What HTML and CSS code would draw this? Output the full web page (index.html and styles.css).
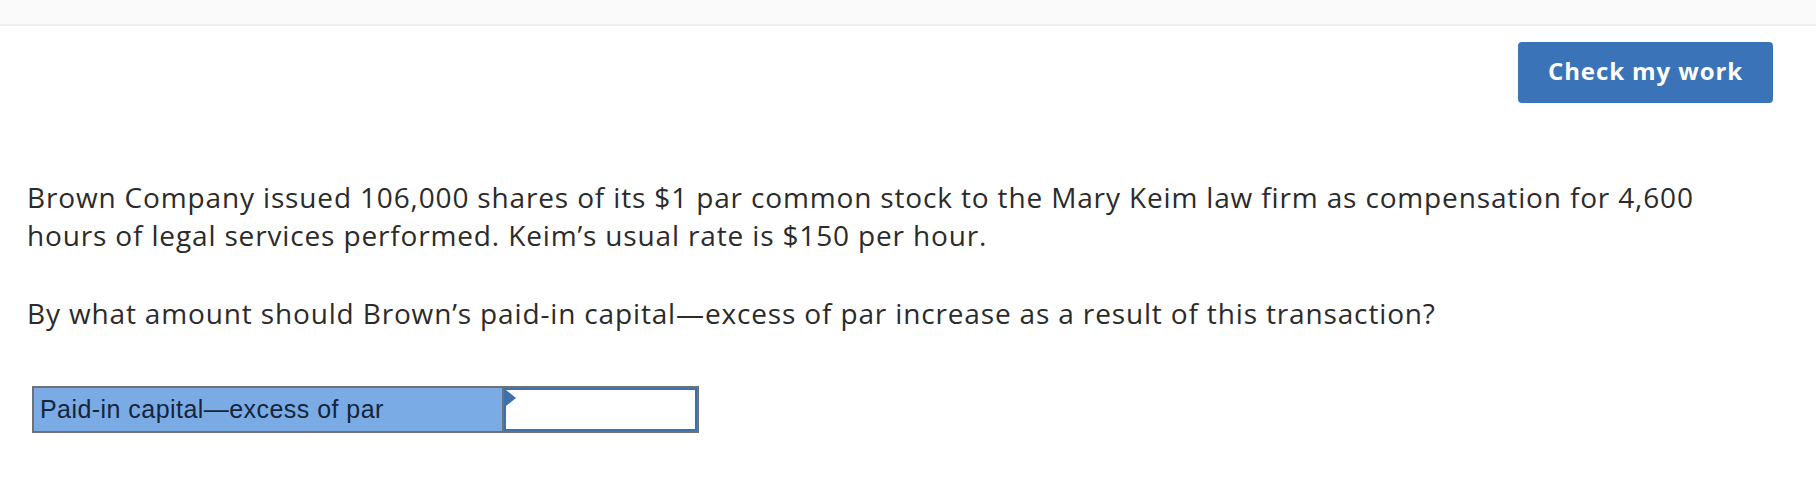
FILE: index.html
```html
<!DOCTYPE html>
<html lang="en">
<head>
    <meta charset="UTF-8">
    <meta name="viewport" content="width=device-width, initial-scale=1.0">
    <title>Question</title>
    <link rel="stylesheet" href="styles.css">
</head>
<body>

    <div class="topbar"></div>

    <div class="content">
        <div class="actions">
            <button class="check-btn">Check my work</button>
        </div>

        <p class="question">Brown Company issued 106,000 shares of its $1 par common stock to the Mary Keim law firm as compensation for 4,600 hours of legal services performed. Keim’s usual rate is $150 per hour.</p>
        <p class="question">By what amount should Brown’s paid-in capital—excess of par increase as a result of this transaction?</p>

        <div class="answer-row">
            <div class="answer-label">Paid-in capital—excess of par</div>
            <div class="answer-cell">
                <input type="text" class="answer-input" />
            </div>
        </div>
    </div>

</body>
</html>
```

FILE: styles.css
```css
body {
    margin: 0;
    background-color: #ffffff;
    font-family: 'Open Sans', sans-serif;
    color: #2b2b2b;
}
.topbar {
    height: 24px;
    background-color: #fafafa;
    border-bottom: 2px solid #efefef;
}
.content {
    padding: 0 43px 0 27px;
}
.actions {
    display: flex;
    justify-content: flex-end;
    padding-top: 16px;
}
.check-btn {
    width: 255px;
    height: 61px;
    padding: 0 0 4px;
    border: none;
    border-radius: 4px;
    background-color: #3a73b8;
    color: #ffffff;
    font-family: 'Open Sans', sans-serif;
    font-weight: 700;
    font-size: 24px;
    letter-spacing: 0.9px;
    cursor: pointer;
}
.question {
    margin: 0;
    font-size: 28px;
    line-height: 38px;
    letter-spacing: 0.85px;
    max-width: 1730px;
}
.question:first-of-type {
    margin-top: 75px;
}
.question + .question {
    margin-top: 40px;
}
.answer-row {
    display: flex;
    width: 663px;
    height: 43px;
    margin-top: 54px;
    margin-left: 5px;
    border: 2px solid #6e7277;
}
.answer-label {
    flex: 0 0 470px;
    background-color: #7aabe4;
    border-right: 2px solid #6e7277;
    font-family: 'Liberation Sans', Arial, sans-serif;
    font-size: 25px;
    letter-spacing: 0.45px;
    line-height: 43px;
    color: #15253a;
    padding-left: 6px;
    box-sizing: border-box;
}
.answer-cell {
    flex: 1;
    position: relative;
}
.answer-cell::before {
    content: "";
    position: absolute;
    top: 2px;
    left: 2px;
    border-top: 8px solid transparent;
    border-bottom: 8px solid transparent;
    border-left: 10px solid #3e70ab;
}
.answer-input {
    width: 100%;
    height: 100%;
    box-sizing: border-box;
    border: 2px solid #3e70ab;
    margin: 0;
    padding: 0 8px;
    font-size: 22px;
    outline: none;
}
```
